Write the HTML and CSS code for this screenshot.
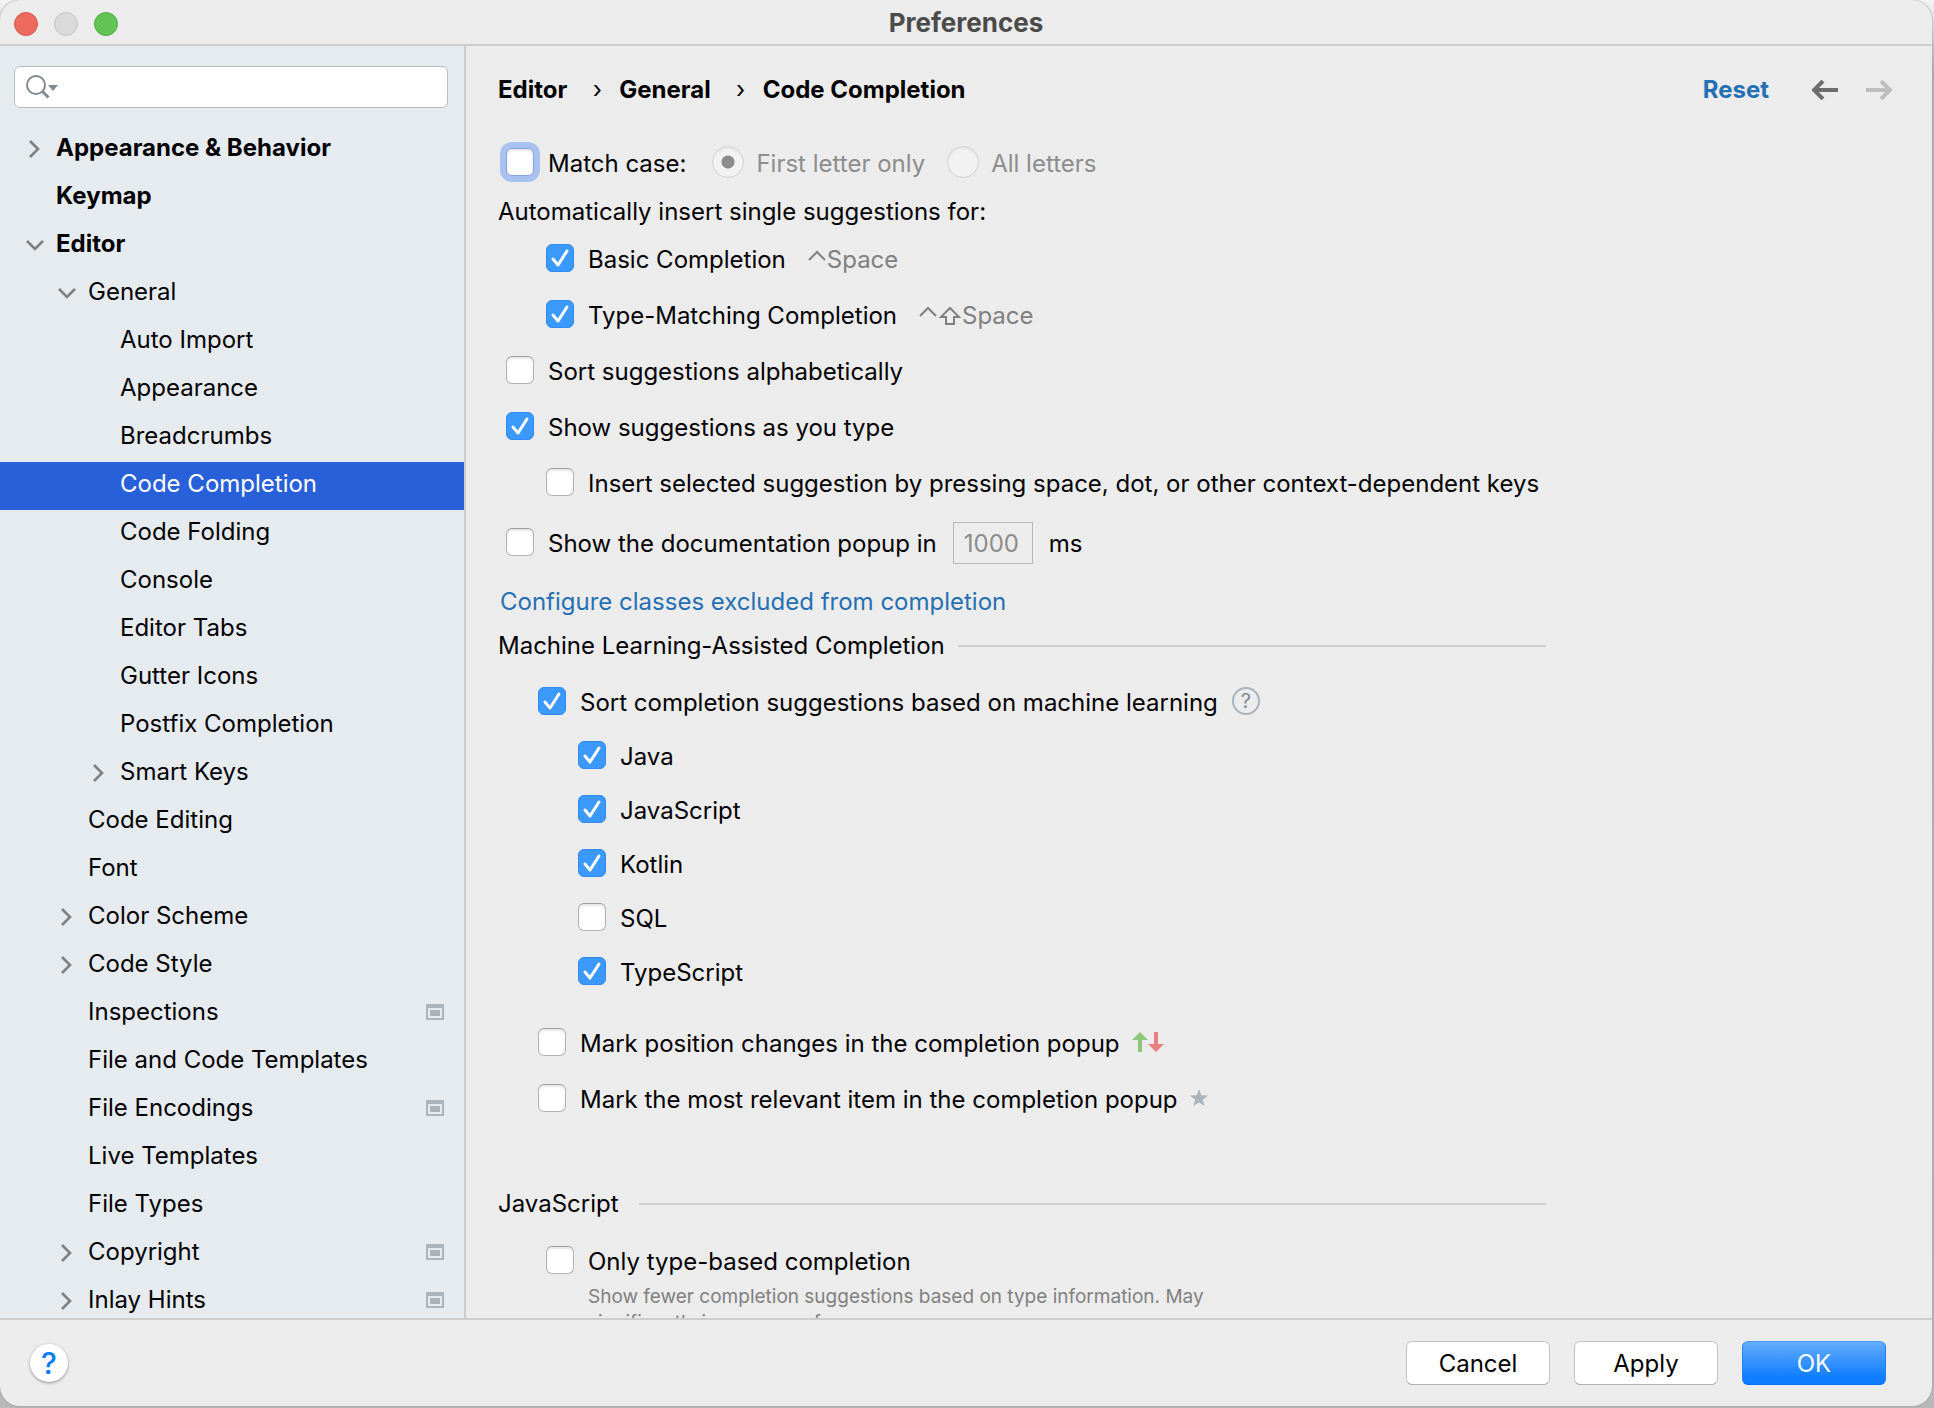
FILE: index.html
```html
<!DOCTYPE html>
<html lang="en">
<head>
    <meta charset="UTF-8">
    <meta name="viewport" content="width=device-width, initial-scale=1.0">
    <title>Preferences</title>
    <link rel="stylesheet" href="styles.css">
</head>
<body>
    <!-- Shared icons -->
    <svg class="icon-defs" aria-hidden="true">
        <symbol id="chevron-right" viewBox="0 0 20 20">
            <path d="M6 2l8 8-8 8" fill="none" stroke="#808080" stroke-width="2.6"/>
        </symbol>
        <symbol id="chevron-down" viewBox="0 0 20 20">
            <path d="M3 6l8 8 8-8" fill="none" stroke="#808080" stroke-width="2.6"/>
        </symbol>
        <symbol id="project-level" viewBox="0 0 18 16">
            <path d="M0 0h18v16H0zM2 4v10h14V4z" fill="#a9b4bc" fill-rule="evenodd"/>
            <path d="M4 6h10v6H4z" fill="#a9b4bc"/>
        </symbol>
    </svg>

    <div class="window">
        <header class="titlebar">
            <div class="lights">
                <button class="light close" aria-label="Close"></button>
                <button class="light minimize" aria-label="Minimize" disabled></button>
                <button class="light zoom" aria-label="Zoom"></button>
            </div>
            <h1>Preferences</h1>
        </header>

        <div class="content">
            <aside class="sidebar">
                <div class="search">
                    <svg width="34" height="26" viewBox="0 0 34 26">
                        <circle cx="11" cy="11" r="9" fill="none" stroke="#7f8b91" stroke-width="2"/>
                        <path d="M17.500 17.500l6 6" stroke="#7f8b91" stroke-width="3"/>
                        <path d="M23 11h10l-5 6z" fill="#7f8b91"/>
                    </svg>
                    <input type="text" aria-label="Search settings">
                </div>
                <nav>
                    <ul class="tree">
                        <li><a href="#" class="top"><svg class="chevron"><use href="#chevron-right"/></svg>Appearance &amp; Behavior</a></li>
                        <li><a href="#" class="top"><span class="chevron"></span>Keymap</a></li>
                        <li><a href="#" class="top"><svg class="chevron"><use href="#chevron-down"/></svg>Editor</a></li>
                        <li><a href="#" class="level1"><svg class="chevron"><use href="#chevron-down"/></svg>General</a></li>
                        <li><a href="#" class="level2"><span class="chevron"></span>Auto Import</a></li>
                        <li><a href="#" class="level2"><span class="chevron"></span>Appearance</a></li>
                        <li><a href="#" class="level2"><span class="chevron"></span>Breadcrumbs</a></li>
                        <li><a href="#" class="level2 selected"><span class="chevron"></span>Code Completion</a></li>
                        <li><a href="#" class="level2"><span class="chevron"></span>Code Folding</a></li>
                        <li><a href="#" class="level2"><span class="chevron"></span>Console</a></li>
                        <li><a href="#" class="level2"><span class="chevron"></span>Editor Tabs</a></li>
                        <li><a href="#" class="level2"><span class="chevron"></span>Gutter Icons</a></li>
                        <li><a href="#" class="level2"><span class="chevron"></span>Postfix Completion</a></li>
                        <li><a href="#" class="level2"><svg class="chevron"><use href="#chevron-right"/></svg>Smart Keys</a></li>
                        <li><a href="#" class="level1"><span class="chevron"></span>Code Editing</a></li>
                        <li><a href="#" class="level1"><span class="chevron"></span>Font</a></li>
                        <li><a href="#" class="level1"><svg class="chevron"><use href="#chevron-right"/></svg>Color Scheme</a></li>
                        <li><a href="#" class="level1"><svg class="chevron"><use href="#chevron-right"/></svg>Code Style</a></li>
                        <li><a href="#" class="level1"><span class="chevron"></span>Inspections<svg class="project"><use href="#project-level"/></svg></a></li>
                        <li><a href="#" class="level1"><span class="chevron"></span>File and Code Templates</a></li>
                        <li><a href="#" class="level1"><span class="chevron"></span>File Encodings<svg class="project"><use href="#project-level"/></svg></a></li>
                        <li><a href="#" class="level1"><span class="chevron"></span>Live Templates</a></li>
                        <li><a href="#" class="level1"><span class="chevron"></span>File Types</a></li>
                        <li><a href="#" class="level1"><svg class="chevron"><use href="#chevron-right"/></svg>Copyright<svg class="project"><use href="#project-level"/></svg></a></li>
                        <li><a href="#" class="level1"><svg class="chevron"><use href="#chevron-right"/></svg>Inlay Hints<svg class="project"><use href="#project-level"/></svg></a></li>
                    </ul>
                </nav>
            </aside>

            <main>
                <div class="page-header">
                    <nav class="breadcrumbs">
                        <span>Editor</span>
                        <span class="separator">›</span>
                        <span>General</span>
                        <span class="separator">›</span>
                        <span>Code Completion</span>
                    </nav>
                    <a href="#" class="reset">Reset</a>
                    <button class="nav-button" aria-label="Back">
                        <svg width="26" height="20" viewBox="0 0 26 20"><path d="M26 10H3M11 1l-9 9 9 9" fill="none" stroke="#6e6e6e" stroke-width="4"/></svg>
                    </button>
                    <button class="nav-button" aria-label="Forward" disabled>
                        <svg width="26" height="20" viewBox="0 0 26 20"><path d="M0 10h23M15 1l9 9-9 9" fill="none" stroke="#bdbdbd" stroke-width="4"/></svg>
                    </button>
                </div>

                <form class="settings">
                    <div class="row match">
                        <label class="option"><input type="checkbox" class="focused"><span>Match case:</span></label>
                        <label class="option disabled"><input type="radio" name="case" checked disabled><span>First letter only</span></label>
                        <label class="option disabled"><input type="radio" name="case" disabled><span>All letters</span></label>
                    </div>
                    <p class="caption">Automatically insert single suggestions for:</p>
                    <div class="row indent">
                        <label class="option"><input type="checkbox" checked><span>Basic Completion</span></label>
                        <span class="shortcut"><svg width="19" height="20" viewBox="0 0 19 20"><path d="M1 10l8-8 8 8" fill="none" stroke="#808080" stroke-width="2"/></svg>Space</span>
                    </div>
                    <div class="row indent">
                        <label class="option"><input type="checkbox" checked><span>Type-Matching Completion</span></label>
                        <span class="shortcut"><svg width="19" height="20" viewBox="0 0 19 20"><path d="M1 10l8-8 8 8" fill="none" stroke="#808080" stroke-width="2"/></svg><svg width="24" height="20" viewBox="0 0 24 20"><path d="M12 2l9 9h-5v7H8v-7H3z" fill="none" stroke="#808080" stroke-width="2"/></svg>Space</span>
                    </div>
                    <div class="row">
                        <label class="option"><input type="checkbox"><span>Sort suggestions alphabetically</span></label>
                    </div>
                    <div class="row">
                        <label class="option"><input type="checkbox" checked><span>Show suggestions as you type</span></label>
                    </div>
                    <div class="row indent">
                        <label class="option"><input type="checkbox"><span>Insert selected suggestion by pressing space, dot, or other context-dependent keys</span></label>
                    </div>
                    <div class="row popup-delay">
                        <label class="option"><input type="checkbox"><span>Show the documentation popup in</span></label>
                        <input type="text" id="delay" class="delay" value="1000" disabled>
                        <label for="delay">ms</label>
                    </div>
                    <div class="row link-row">
                        <a href="#">Configure classes excluded from completion</a>
                    </div>

                    <h2>Machine Learning-Assisted Completion</h2>
                    <div class="group">
                        <div class="row compact">
                            <label class="option"><input type="checkbox" checked><span>Sort completion suggestions based on machine learning</span></label>
                            <button type="button" class="context-help" aria-label="Help">?</button>
                        </div>
                        <div class="row compact indent">
                            <label class="option"><input type="checkbox" checked><span>Java</span></label>
                        </div>
                        <div class="row compact indent">
                            <label class="option"><input type="checkbox" checked><span>JavaScript</span></label>
                        </div>
                        <div class="row compact indent">
                            <label class="option"><input type="checkbox" checked><span>Kotlin</span></label>
                        </div>
                        <div class="row compact indent">
                            <label class="option"><input type="checkbox"><span>SQL</span></label>
                        </div>
                        <div class="row compact indent">
                            <label class="option"><input type="checkbox" checked><span>TypeScript</span></label>
                        </div>
                        <div class="row marks">
                            <label class="option"><input type="checkbox"><span>Mark position changes in the completion popup</span></label>
                            <svg width="32" height="20" viewBox="0 0 32 20">
                                <path d="M8 0l8 8h-6v12H6V8H0z" fill="#8cc878"/>
                                <path d="M24 20l8-8h-6V0h-4v12h-6z" fill="#e87f7f"/>
                            </svg>
                        </div>
                        <div class="row">
                            <label class="option"><input type="checkbox"><span>Mark the most relevant item in the completion popup</span></label>
                            <svg width="18" height="18" viewBox="0 0 18 18"><path d="M9 0l2.400 6.200 6.600.3-5.100 4.200 1.700 6.300L9 13.400 3.400 17l1.700-6.300L0 6.500l6.600-.3z" fill="#a9b4bc"/></svg>
                        </div>
                    </div>

                    <h2 class="language">JavaScript</h2>
                    <div class="group">
                        <div class="row nested">
                            <label class="option"><input type="checkbox"><span>Only type-based completion</span></label>
                        </div>
                        <p class="hint">Show fewer completion suggestions based on type information. May significantly increase performance.</p>
                    </div>
                </form>
            </main>
        </div>

        <footer>
            <button class="help" aria-label="Help">?</button>
            <button class="button">Cancel</button>
            <button class="button">Apply</button>
            <button class="button primary">OK</button>
        </footer>
    </div>
</body>
</html>
```
FILE: styles.css
```css
* {
    box-sizing: border-box;
}

body {
    margin: 0;
    height: 100vh;
    padding: 0 2px 2px 0;
    overflow: hidden;
    background: linear-gradient(#f4f4f4, #b0b0b0 5%, #b8b8b8);
    color: #000;
    font-family: Inter, "Liberation Sans", sans-serif;
    font-size: 24px;
    line-height: 32px;
}

button, input {
    margin: 0;
    font: inherit;
}

a {
    color: #2470b3;
    text-decoration: none;
}

.icon-defs {
    position: absolute;
    width: 0;
    height: 0;
}

.window {
    display: flex;
    flex-direction: column;
    height: 100%;
    overflow: hidden;
    background: #ececec;
    border-radius: 20px;
    box-shadow: 0 0 2px #8c8c8c;
}

/* Title bar */
.titlebar {
    display: grid;
    grid-template-columns: 1fr auto 1fr;
    align-items: center;
    flex: none;
    height: 46px;
    padding: 0 14px;
    border-bottom: 2px solid #cdcdcd;
}

.titlebar h1 {
    margin: 0;
    padding-top: 1px;
    font-size: 26px;
    font-weight: 700;
    color: #4b4b4b;
}

.lights {
    display: flex;
    gap: 16px;
    padding-top: 4px;
}

.light {
    width: 24px;
    height: 24px;
    padding: 0;
    border: 1px solid #d75449;
    border-radius: 50%;
    background: #ed6a5e;
}

.light.minimize {
    border-color: #c3c3c3;
    background: #dadada;
}

.light.zoom {
    border-color: #52a842;
    background: #61c454;
}

.content {
    display: flex;
    flex: 1;
    min-height: 0;
}

/* Sidebar */
.sidebar {
    flex: none;
    width: 466px;
    overflow: hidden;
    background: #e6ebef;
    border-right: 2px solid #cdcdcd;
}

.search {
    display: flex;
    align-items: center;
    height: 42px;
    margin: 20px 16px 18px 14px;
    padding: 0 10px;
    border: 1px solid #b9bdc1;
    border-radius: 6px;
    background: #fff;
}

.search input {
    flex: 1;
    min-width: 0;
    border: 0;
    outline: 0;
    background: none;
}

.tree {
    margin: 0;
    padding: 0;
    list-style: none;
}

.tree a {
    display: flex;
    align-items: center;
    height: 48px;
    padding: 0 20px 4px 24px;
    color: #000;
    white-space: nowrap;
}

.tree .top {
    font-weight: 700;
}

.tree .level1 {
    padding-left: 56px;
}

.tree .level2 {
    padding-left: 88px;
}

.tree .selected {
    background: #2860d9;
    color: #fff;
}

.chevron {
    flex: none;
    width: 20px;
    height: 20px;
    margin: 2px 12px 0 0;
}

.project {
    width: 18px;
    height: 16px;
    margin: 0 0 0 auto;
}

/* Settings page */
main {
    flex: 1;
    min-width: 0;
    overflow: hidden;
    padding: 0 40px 0 32px;
}

.page-header {
    display: flex;
    align-items: center;
    height: 88px;
}

.breadcrumbs {
    display: flex;
    flex: 1;
    font-weight: 700;
}

.separator {
    width: 52px;
    padding-left: 8px;
    text-align: center;
    font-weight: 400;
}

.reset {
    margin-right: 43px;
    font-weight: 700;
}

.nav-button {
    display: flex;
    padding: 0;
    border: 0;
    background: none;
}

.nav-button + .nav-button {
    margin-left: 28px;
}

.settings {
    width: 1048px;
    max-width: 100%;
    padding-top: 4px;
}

.row {
    display: flex;
    align-items: center;
    height: 56px;
    padding-left: 8px;
    white-space: nowrap;
}

.row.match {
    height: 48px;
    gap: 26px;
}

.row.match .option + .option + .option {
    margin-left: -4px;
}

.row.indent,
.row.nested {
    padding-left: 48px;
}

.row.compact {
    height: 54px;
}

.row.popup-delay {
    height: 64px;
}

.option {
    display: flex;
    align-items: center;
    gap: 14px;
}

.option span {
    padding-top: 4px;
}

.option.disabled {
    color: #8c8c8c;
}

.option input {
    flex: none;
    width: 28px;
    height: 28px;
    appearance: none;
    border: 1px solid #b4b4b4;
    border-top-color: #a0a0a0;
    border-radius: 6px;
    background: #fff;
    box-shadow: inset 0 2px 2px #e6e6e6;
}

.option input:checked {
    border-color: #318cf7;
    background: #3b99fc url("data:image/svg+xml,%3Csvg xmlns='http://www.w3.org/2000/svg' viewBox='0 0 26 26'%3E%3Cpath d='M6 14l5 6 9-14' fill='none' stroke='%23fff' stroke-width='3' stroke-linecap='round' stroke-linejoin='round'/%3E%3C/svg%3E");
    box-shadow: none;
}

.option input.focused {
    border-color: #85a3e0;
    box-shadow: 0 0 0 6px #a8c1f0, inset 0 2px 2px #e6e6e6;
}

.option input[type="radio"] {
    width: 32px;
    height: 32px;
    margin-right: -2px;
    border-color: #d2d2d2;
    border-radius: 50%;
    background: #f2f2f2;
    box-shadow: inset 0 2px 2px #e6e6e6;
}

.option input[type="radio"]:checked {
    background: radial-gradient(circle, #8c8c8c 6px, #f2f2f2 7px);
}

.caption {
    height: 44px;
    margin: 0;
    padding-top: 10px;
}

.shortcut {
    display: flex;
    align-items: center;
    margin-left: 22px;
    padding-top: 4px;
    color: #808080;
}

.delay {
    width: 80px;
    height: 42px;
    margin: 2px 16px 0;
    padding: 0 10px;
    border: 1px solid #b9b9b9;
    background: #ececec;
    color: #8c8c8c;
}

.delay + label {
    padding-top: 4px;
}

.link-row {
    padding-left: 2px;
}

h2 {
    display: flex;
    align-items: center;
    gap: 13px;
    margin: 0;
    font-size: 24px;
    font-weight: 400;
}

h2::after {
    content: "";
    flex: 1;
    height: 2px;
    background: #cdcdcd;
}

.language {
    gap: 20px;
    margin-top: 62px;
}

.group {
    padding: 12px 0 0 32px;
}

.language + .group {
    padding-left: 0;
}

.context-help {
    width: 28px;
    height: 28px;
    margin-left: 14px;
    padding: 0;
    border: 2px solid #a9b4bc;
    border-radius: 50%;
    background: none;
    color: #7f8b91;
    font-size: 20px;
    line-height: 24px;
}

.row.marks {
    margin-top: 16px;
}

.row > svg {
    margin-left: 12px;
}

.hint {
    width: 640px;
    margin: -4px 0 0 90px;
    color: #808080;
    font-size: 19px;
    line-height: 26px;
}

/* Bottom buttons */
footer {
    display: flex;
    align-items: center;
    gap: 24px;
    flex: none;
    height: 88px;
    padding: 0 46px 0 30px;
    border-top: 2px solid #cdcdcd;
}

.help {
    width: 38px;
    height: 38px;
    margin-right: auto;
    padding: 0;
    border: 0;
    border-radius: 50%;
    background: #fff;
    box-shadow: 0 1px 3px rgba(0, 0, 0, 0.4);
    color: #0a7aff;
    font-size: 30px;
    font-weight: 500;
}

.button {
    width: 144px;
    height: 44px;
    padding: 2px 0 0;
    border: 1px solid #c4c4c4;
    border-bottom-color: #adadad;
    border-radius: 6px;
    background: #fff;
    color: #000;
}

.button.primary {
    border-color: #4a9cf5 #1f80fb #0a6cf5;
    background: linear-gradient(#64aefc, #0f7dff 85%);
    color: #fff;
}
```
